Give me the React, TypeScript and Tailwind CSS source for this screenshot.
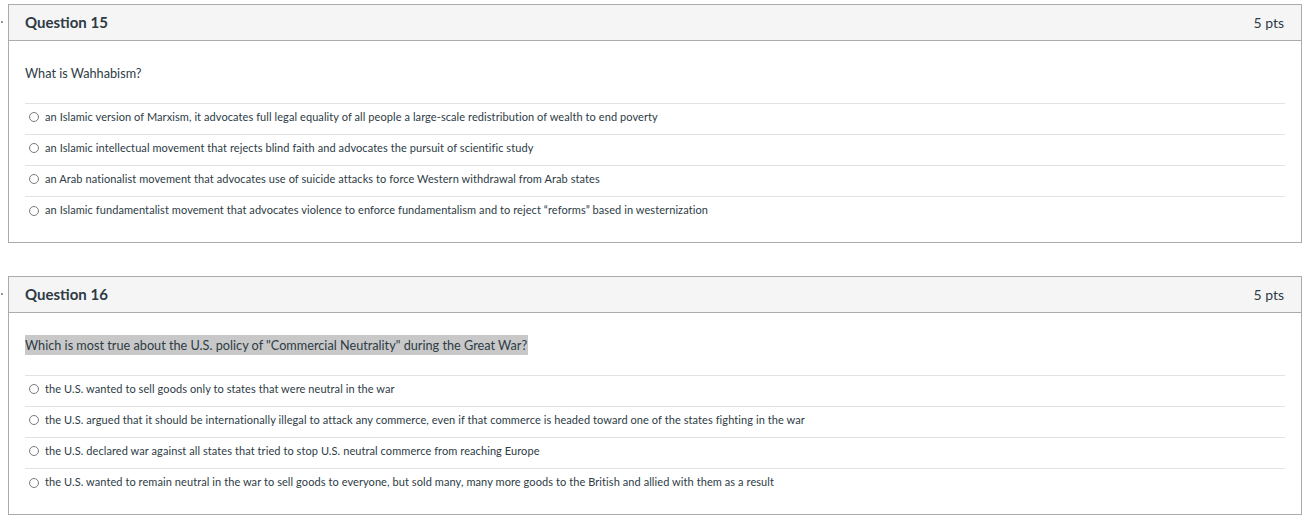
import React from "react";

type Question = {
  id: number;
  points: number;
  prompt: string;
  highlighted?: boolean;
  answers: string[];
};

const questions: Question[] = [
  {
    id: 15,
    points: 5,
    prompt: "What is Wahhabism?",
    answers: [
      "an Islamic version of Marxism, it advocates full legal equality of all people a large-scale redistribution of wealth to end poverty",
      "an Islamic intellectual movement that rejects blind faith and advocates the pursuit of scientific study",
      "an Arab nationalist movement that advocates use of suicide attacks to force Western withdrawal from Arab states",
      "an Islamic fundamentalist movement that advocates violence to enforce fundamentalism and to reject \u201creforms\u201d based in westernization",
    ],
  },
  {
    id: 16,
    points: 5,
    prompt: "Which is most true about the U.S. policy of \"Commercial Neutrality\" during the Great War?",
    highlighted: true,
    answers: [
      "the U.S. wanted to sell goods only to states that were neutral in the war",
      "the U.S. argued that it should be internationally illegal to attack any commerce, even if that commerce is headed toward one of the states fighting in the war",
      "the U.S. declared war against all states that tried to stop U.S. neutral commerce from reaching Europe",
      "the U.S. wanted to remain neutral in the war to sell goods to everyone, but sold many, many more goods to the British and allied with them as a result",
    ],
  },
];

const QuestionCard = ({ q }: { q: Question }) => (
  <div className="relative w-[1294px] border border-[#ababab] bg-white">
    <span className="absolute left-[-8px] top-[16px] h-[2px] w-[2px] bg-[#9a9a9a]" />
    <div className="flex h-[36px] items-center justify-between border-b border-[#ababab] bg-[#f5f5f5] pl-[16px] pr-[17px]">
      <h2 className="text-[15px] font-bold text-[#2d3b45]">Question {q.id}</h2>
      <span className="text-[14px] text-[#2d3b45]">{q.points} pts</span>
    </div>
    <div className="px-[16px] pb-[14px] pt-[22px]">
      <div className="h-[20px] text-[12.7px] leading-[20px] text-[#2d3b45]">
        <span className={q.highlighted ? "bg-[#c8c8c8] py-[2px] pr-[1px]" : ""}>{q.prompt}</span>
      </div>
      <div className="mt-[20px] border-t border-[#e2e2e2]">
        {q.answers.map((a, i) => (
          <label
            key={i}
            className={`flex h-[31px] items-center gap-[6px] pb-[4px] pl-[4px] text-[11px] tracking-[0.08px] text-[#2d3b45] ${
              i < q.answers.length - 1 ? "border-b border-[#e2e2e2]" : ""
            }`}
          >
            <span className="h-[10px] w-[10px] shrink-0 rounded-full border border-[#7a7a7a] bg-white" />
            <span>{a}</span>
          </label>
        ))}
      </div>
    </div>
  </div>
);

export default function App() {
  return (
    <div
      className="min-h-[522px] w-[1307px] bg-white pl-[8px] pt-[4px]"
      style={{ fontFamily: "Lato, 'Noto Sans', sans-serif" }}
    >
      <div className="flex flex-col gap-[33px]">
        {questions.map((q) => (
          <QuestionCard key={q.id} q={q} />
        ))}
      </div>
    </div>
  );
}
